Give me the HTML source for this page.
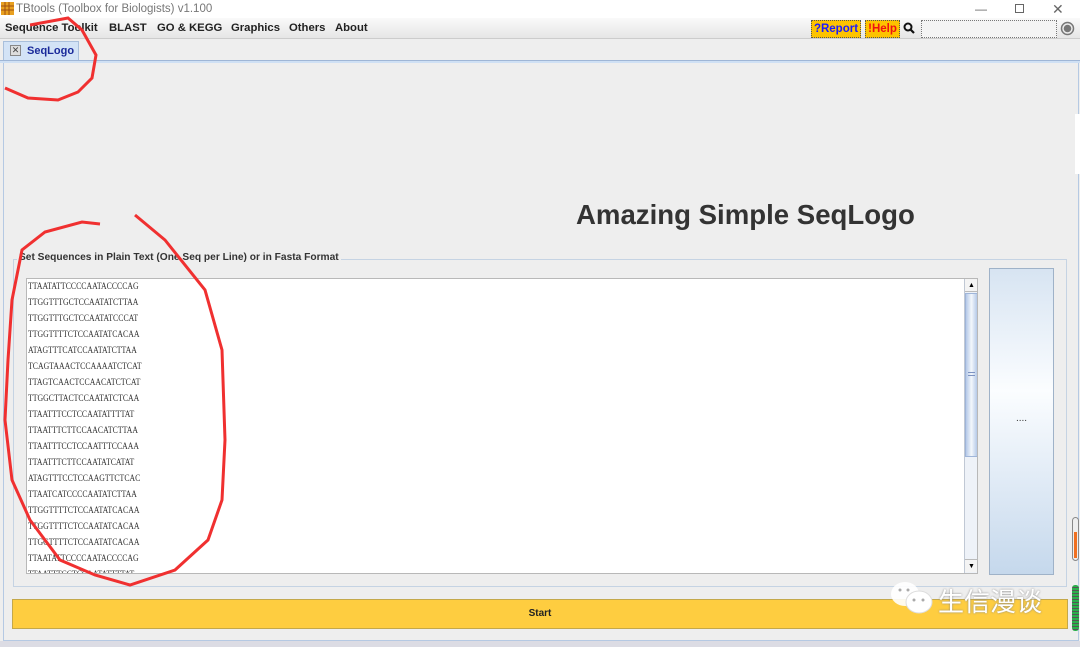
<!DOCTYPE html>
<html><head><meta charset="utf-8"><style>
*{margin:0;padding:0;box-sizing:border-box}
body{width:1080px;height:647px;background:#eeeeee;font-family:"Liberation Sans",sans-serif;position:relative;overflow:hidden}
.abs{position:absolute}
.menu span{position:absolute;top:22px;font-size:11.3px;font-weight:bold;color:#222}
.seq{font-family:"Liberation Serif",serif;font-size:9.5px;color:#333;line-height:16px;white-space:pre;transform:scaleX(0.82);transform-origin:0 0}
</style></head><body>
<div class="abs" style="left:0;top:0;width:1080px;height:18px;background:#fff"></div>
<svg class="abs" style="left:1px;top:2px" width="14" height="14"><rect x="0" y="0" width="13" height="13" fill="#e8a020"/><path d="M4 0V13M8 0V13M0 4H13M0 8H13" stroke="#a05010" stroke-width="1"/></svg>
<div class="abs" style="left:16px;top:3px;font-size:11.5px;color:#777">TBtools (Toolbox for Biologists) v1.100</div>
<div class="abs" style="left:975px;top:2px;font-size:12px;color:#666">—</div>
<div class="abs" style="left:1015px;top:4px;width:9px;height:9px;border:1px solid #666"></div>
<div class="abs" style="left:1052px;top:1px;font-size:14px;color:#666">✕</div>
<div class="abs" style="left:0;top:18px;width:1080px;height:21px;background:linear-gradient(#fafafa,#e6e6e6);border-bottom:1px solid #ccc"></div>
<div class="menu">
<span style="left:5px">Sequence Toolkit</span><span style="left:109px">BLAST</span><span style="left:157px">GO &amp; KEGG</span><span style="left:231px">Graphics</span><span style="left:289px">Others</span><span style="left:335px">About</span>
</div>
<div class="abs" style="left:811px;top:20px;width:50px;height:18px;background:#fdc300;border:1px dotted #555;font-size:11.5px;font-weight:bold;color:#1a1aff;text-align:center;line-height:16px">?Report</div>
<div class="abs" style="left:865px;top:20px;width:35px;height:18px;background:#fdc300;border:1px dotted #555;font-size:11.5px;font-weight:bold;color:#ee1111;text-align:center;line-height:16px">!Help</div>
<svg class="abs" style="left:903px;top:22px" width="12" height="12"><circle cx="5" cy="5" r="3.5" stroke="#111" stroke-width="2" fill="none"/><path d="M7.5 7.5L11 11" stroke="#111" stroke-width="2.2"/></svg>
<div class="abs" style="left:921px;top:20px;width:136px;height:18px;background:#f4f4f4;border:1px dotted #777"></div>
<svg class="abs" style="left:1060px;top:21px" width="15" height="15"><circle cx="7.5" cy="7.5" r="6" stroke="#777" stroke-width="1.5" fill="#eee"/><circle cx="7.5" cy="7.5" r="3.8" fill="#777"/></svg>
<div class="abs" style="left:3px;top:41px;width:76px;height:20px;background:#d3e3f6;border:1px solid #a9bfdb;border-bottom:none"></div>
<div class="abs" style="left:10px;top:45px;width:11px;height:11px;border:1px solid #888;background:#ddd;font-size:9px;line-height:9px;text-align:center;color:#444">✕</div>
<div class="abs" style="left:27px;top:45px;font-size:11px;font-weight:bold;color:#1a2a9a">SeqLogo</div>
<div class="abs" style="left:0;top:60px;width:1080px;height:3px;background:#cfe0f4;border-top:1px solid #9fb6d6"></div>
<div class="abs" style="left:3px;top:63px;width:1076px;height:578px;border-left:1px solid #b5c9e3;border-right:1px solid #b5c9e3;border-bottom:1px solid #b5c9e3"></div>
<div class="abs" style="left:1075px;top:114px;width:5px;height:60px;background:#fff"></div>
<div class="abs" style="left:0;top:641px;width:1080px;height:6px;background:#dcdce4"></div>
<div class="abs" style="left:576px;top:199px;font-size:27.6px;font-weight:bold;color:#333">Amazing Simple SeqLogo</div>
<div class="abs" style="left:13px;top:259px;width:1054px;height:328px;border:1px solid #c5d3e3"></div>
<div class="abs" style="left:17px;top:252px;padding:0 2px;background:#eee;font-size:10.2px;font-weight:bold;color:#333">Set Sequences in Plain Text (One Seq per Line) or in Fasta Format</div>
<div class="abs" style="left:26px;top:278px;width:952px;height:296px;background:#fff;border:1px solid #b8b8b8;overflow:hidden">
<div class="seq" style="position:absolute;left:1px;top:0px">TTAATATTCCCCAATACCCCAG
TTGGTTTGCTCCAATATCTTAA
TTGGTTTGCTCCAATATCCCAT
TTGGTTTTCTCCAATATCACAA
ATAGTTTCATCCAATATCTTAA
TCAGTAAACTCCAAAATCTCAT
TTAGTCAACTCCAACATCTCAT
TTGGCTTACTCCAATATCTCAA
TTAATTTCCTCCAATATTTTAT
TTAATTTCTTCCAACATCTTAA
TTAATTTCCTCCAATTTCCAAA
TTAATTTCTTCCAATATCATAT
ATAGTTTCCTCCAAGTTCTCAC
TTAATCATCCCCAATATCTTAA
TTGGTTTTCTCCAATATCACAA
TTGGTTTTCTCCAATATCACAA
TTGGTTTTCTCCAATATCACAA
TTAATATTCCCCAATACCCCAG
TTAATTTCCTCCAATATTTTAT</div>
<div class="abs" style="left:937px;top:0;width:14px;height:294px;background:#eef2f8;border-left:1px solid #c0c8d4">
<div class="abs" style="left:0;top:0;width:13px;height:13px;background:#f4f4f4;border-bottom:1px solid #bbb;font-size:7px;text-align:center;line-height:13px">▲</div>
<div class="abs" style="left:0;top:14px;width:13px;height:164px;background:linear-gradient(90deg,#b5c9e8,#f3f7fc,#b5c9e8);border:1px solid #9fb5d9"></div>
<div class="abs" style="left:3px;top:93px;width:7px;height:4px;border-top:1px solid #7d93c2;border-bottom:1px solid #7d93c2"></div>
<div class="abs" style="left:0;top:280px;width:13px;height:13px;background:#f4f4f4;border-top:1px solid #bbb;font-size:7px;text-align:center;line-height:13px">▼</div>
</div>
</div>
<div class="abs" style="left:989px;top:268px;width:65px;height:307px;background:linear-gradient(#d7e4f2,#fbfdff 40%,#c5d8ec);border:1px solid #9fb2c8;font-size:10px;text-align:center;line-height:300px;color:#333">....</div>
<div class="abs" style="left:12px;top:599px;width:1056px;height:30px;background:#fecd40;border:1px solid #c4a84a;font-size:10px;font-weight:bold;text-align:center;line-height:28px;color:#222">Start</div>
<div class="abs" style="left:1072px;top:517px;width:7px;height:44px;border:1px solid #888;border-radius:4px;background:#eee"><div style="margin:14px 0 0 1px;width:3px;height:26px;background:#f07020"></div></div>
<div class="abs" style="left:1072px;top:585px;width:7px;height:46px;border-radius:3px;background:repeating-linear-gradient(#2ab04a 0 2px,#555 2px 3px)"></div>
<svg class="abs" style="left:890px;top:578px" width="50" height="40"><ellipse cx="15" cy="16" rx="14" ry="12" fill="#fff" opacity=".9"/><ellipse cx="29" cy="24" rx="13" ry="11" fill="#fff" stroke="#ddd"/><circle cx="10" cy="12" r="1.5" fill="#aaa"/><circle cx="18" cy="12" r="1.5" fill="#aaa"/><circle cx="24" cy="22" r="1.5" fill="#aaa"/><circle cx="33" cy="22" r="1.5" fill="#aaa"/></svg>
<div class="abs" style="left:938px;top:582px;font-family:'Liberation Sans','Noto Sans CJK SC',sans-serif;font-size:26px;color:#fff;text-shadow:0 0 2px #888">生信漫谈</div>
<svg class="abs" style="left:0;top:0" width="1080" height="647" fill="none" stroke="#f03030" stroke-width="3">
<path d="M30 25 L68 18 L82 30 L96 55 L92 78 L78 92 L58 100 L28 98 L5 88"/>
<path d="M100 224 L82 222 L45 232 L22 250 L12 300 L8 360 L5 420 L12 480 L30 520 L60 560 L95 575 L130 585 L175 570 L208 540 L222 500 L225 440 L222 350 L205 290 L165 240 L135 215"/>
</svg>
</body></html>
